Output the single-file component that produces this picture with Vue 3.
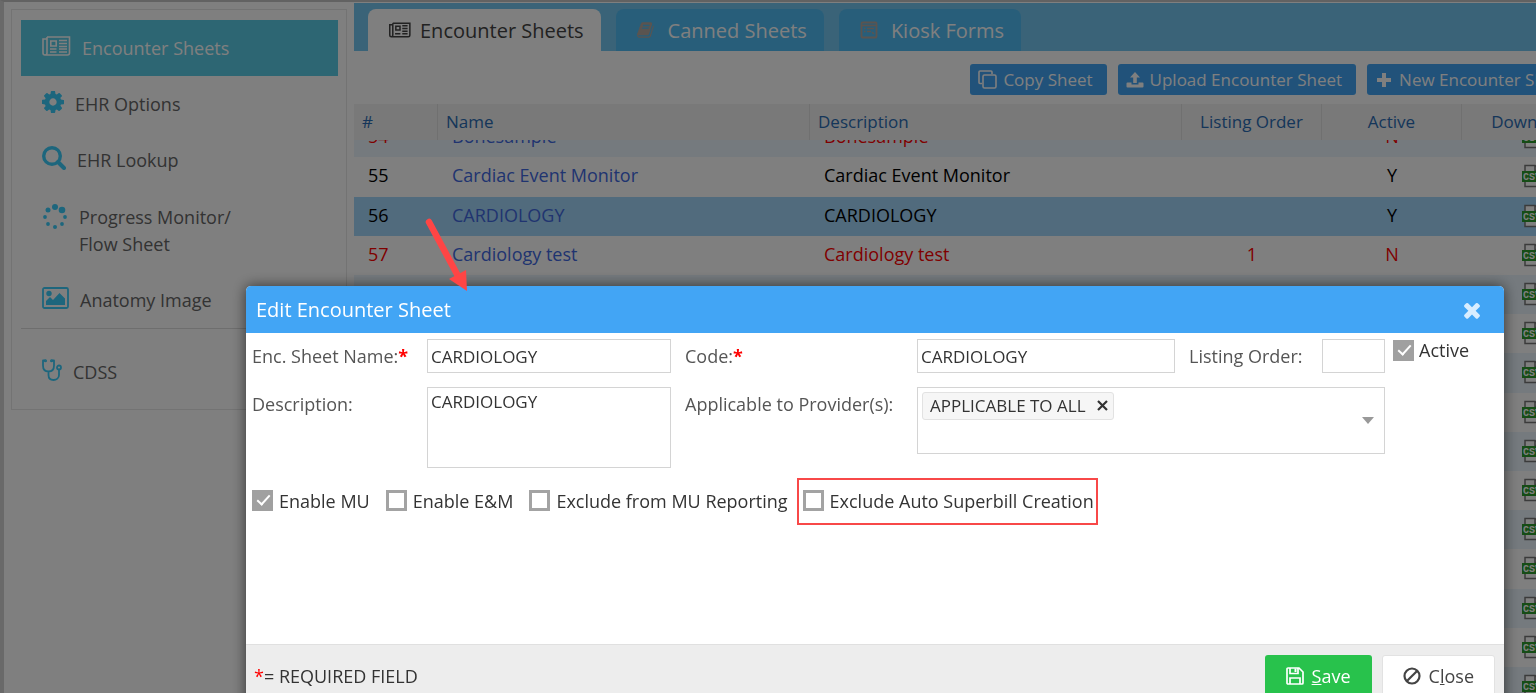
<script setup>
import { ref } from 'vue'

const rows = ref([
  { n: 54, name: 'Bonesample', desc: 'Bonesample', order: '', active: 'N' },
  { n: 55, name: 'Cardiac Event Monitor', desc: 'Cardiac Event Monitor', order: '', active: 'Y' },
  { n: 56, name: 'CARDIOLOGY', desc: 'CARDIOLOGY', order: '', active: 'Y' },
  { n: 57, name: 'Cardiology test', desc: 'Cardiology test', order: '1', active: 'N' },
  ...Array.from({ length: 11 }, () => ({ n: '', name: '', desc: '', order: '', active: '' })),
])

const form = ref({
  name: 'CARDIOLOGY',
  code: 'CARDIOLOGY',
  order: '',
  active: true,
  description: 'CARDIOLOGY',
  enableMu: true,
  enableEm: false,
  excludeMu: false,
  excludeSuperbill: false,
})
</script>

<template>
  <div class="page">
    <aside class="side">
      <nav class="menu" aria-label="Encounter settings">
        <a href="#" class="item current">
          <svg class="ico" width="29" height="20" viewBox="0 0 29 20" fill="none" stroke="currentColor" stroke-width="1.6">
            <path d="M5 1h22.500v16a2 2 0 0 1-2 2H3a2 2 0 0 1-2-2V3h4M5 1v16a2 2 0 0 1-2 2" />
            <path d="M8.800 5h5.400v5H8.800zM17 4.500h8M17 7.500h8M17 10.500h8M8 13h6.500M17 13h8M8 16h6.500M17 16h8" />
          </svg>
          <span>Encounter Sheets</span>
        </a>
        <a href="#" class="item">
          <svg class="ico" width="22" height="22" viewBox="0 0 1536 1536" fill="currentColor">
            <path d="M1024 768q0-106-75-181t-181-75-181 75-75 181 75 181 181 75 181-75 75-181zm512-109v222q0 12-8 23t-20 13l-185 28q-19 54-39 91 35 50 107 138 10 12 10 25t-9 23q-27 37-99 108t-94 71q-12 0-26-9l-138-108q-44 23-91 38-16 136-29 186-7 28-36 28h-222q-14 0-24.500-8.500t-11.500-21.500l-28-184q-49-16-90-37l-141 107q-10 9-25 9-14 0-25-11-126-114-165-168-7-10-7-23 0-12 8-23 15-21 51-66.500t54-70.500q-27-50-41-99l-183-27q-13-2-21-12.500t-8-23.500v-222q0-12 8-23t19-13l186-28q14-46 39-92-40-57-107-138-10-12-10-24 0-10 9-23 26-36 98.500-107.500t94.500-71.500q13 0 26 10l138 107q44-23 91-38 16-136 29-186 7-28 36-28h222q14 0 24.500 8.500t11.500 21.500l28 184q49 16 90 37l142-107q9-9 24-9 13 0 25 10 129 119 165 170 7 8 7 22 0 12-8 23-15 21-51 66.500t-54 70.500q26 50 41 98l183 28q13 2 21 12.500t8 23.500z" />
          </svg>
          <span>EHR Options</span>
        </a>
        <a href="#" class="item">
          <svg class="ico" width="24" height="24" viewBox="0 0 24 24" fill="none" stroke="currentColor">
            <circle cx="10" cy="10" r="8.300" stroke-width="3.400" />
            <path d="M16 16l6 6" stroke-width="4" stroke-linecap="round" />
          </svg>
          <span>EHR Lookup</span>
        </a>
        <a href="#" class="item tall">
          <svg class="ico" width="26" height="26" viewBox="0 0 26 26" fill="currentColor">
            <circle cx="13" cy="3" r="3" /><circle cx="20" cy="6" r="3.300" />
            <circle cx="23" cy="13" r="1.900" /><circle cx="20" cy="20" r="1.900" />
            <circle cx="13" cy="23" r="2" /><circle cx="6" cy="20" r="1.900" />
            <circle cx="3" cy="13" r="1.900" /><circle cx="6" cy="6" r="2.500" />
          </svg>
          <span>Progress Monitor/<br>Flow Sheet</span>
        </a>
        <a href="#" class="item">
          <svg class="ico" width="27" height="22" viewBox="0 0 27 22" fill="none">
            <rect x="1" y="1" width="25" height="20" rx="1.500" stroke="currentColor" stroke-width="1.800" />
            <circle cx="7" cy="6.500" r="2.700" fill="currentColor" />
            <path d="M4 18v-4l4-4 3 3 6.500-7 5.500 5.500V18z" fill="currentColor" />
          </svg>
          <span>Anatomy Image</span>
        </a>
        <hr class="rule">
        <a href="#" class="item last">
          <svg class="ico" width="20" height="22" viewBox="0 0 20 22" fill="none" stroke="currentColor" stroke-width="1.800">
            <path d="M3.500 1.500H1v5c0 3.500 2 6 5.500 6s5.500-2.500 5.500-6v-5H9.500M6.500 12.500V16c0 3 2 5 5 5s5.500-2 5.500-5v-5.500" stroke-linejoin="round" />
            <circle cx="17" cy="8.500" r="2" /><circle cx="3.500" cy="1.800" r="0.600" /><circle cx="9.500" cy="1.800" r="0.600" />
          </svg>
          <span>CDSS</span>
        </a>
      </nav>
    </aside>

    <main class="main">
      <div class="wide">
        <div class="tabs" role="tablist">
          <button type="button" role="tab" class="tab on" aria-selected="true">
            <svg width="22" height="16" viewBox="0 0 29 20" fill="none" stroke="currentColor" stroke-width="2">
              <path d="M5 1h22.500v16a2 2 0 0 1-2 2H3a2 2 0 0 1-2-2V3h4M5 1v16a2 2 0 0 1-2 2" />
              <path d="M9 5h5.500v5H9zM17.500 4.500h7M17.500 8h7M17.500 11.500h7M8 15h7M17.500 15h7" />
            </svg>
            Encounter Sheets
          </button>
          <button type="button" role="tab" class="tab" aria-selected="false">
            <svg width="22" height="18" viewBox="0 0 1792 1792" preserveAspectRatio="xMinYMid meet" fill="currentColor">
              <path d="M1639 478q40 57 18 129l-275 906q-19 64-76.500 107.500t-122.500 43.500h-923q-77 0-148.500-53.500t-99.500-131.500q-24-67-2-127 0-4 3-27t4-37q1-8-3-21.500t-3-19.500q2-11 8-21t16.500-23.500 16.500-23.500q23-38 45-91.500t30-91.500q3-10 .5-30t-.5-28q3-11 17-28t17-23q21-36 42-92t25-90q1-9-2.500-32t.5-28q4-13 22-30.500t22-22.500q19-26 42.500-84.500t27.500-96.500q1-8-3-25.500t-2-26.500q2-8 9-18t18-23 17-21q8-12 16.500-30.500t15-35 16-36 19.500-32 26.500-23.500 36-11.500 47.500 5.500l-1 3q38-9 51-9h761q74 0 114 56t18 130l-274 906q-36 119-71.500 153.500t-128.500 34.500h-869q-27 0-38 15-11 16-1 43 24 70 144 70h923q29 0 56-15.500t35-41.500l300-987q7-22 5-57 38 15 59 43zm-1064 2q-4 13 2 22.500t20 9.500h608q13 0 25.500-9.500t16.500-22.500l21-64q4-13-2-22.500t-20-9.500h-608q-13 0-25.500 9.500t-16.500 22.500zm-83 256q-4 13 2 22.500t20 9.500h608q13 0 25.500-9.500t16.500-22.500l21-64q4-13-2-22.500t-20-9.500h-608q-13 0-25.500 9.500t-16.500 22.500z" />
            </svg>
            Canned Sheets
          </button>
          <button type="button" role="tab" class="tab" aria-selected="false">
            <svg width="22" height="18" viewBox="0 0 18 18" preserveAspectRatio="xMinYMid meet" fill="none" stroke="currentColor">
              <rect x="1.500" y="1.500" width="15" height="15" rx="1" stroke-width="1.800" />
              <path d="M2 4.500h14" stroke-width="1.800" />
              <path d="M4 7.500h1.500M7 7.500h7M4 10.500h1.500M7 10.500h4M12 11l2 2" stroke-width="1.400" />
            </svg>
            Kiosk Forms
          </button>
        </div>

        <div class="tools">
          <button type="button" class="btn">
            <svg width="19" height="19" viewBox="0 0 19 19" fill="none" stroke="currentColor" stroke-width="1.600">
              <rect x="5" y="5" width="13" height="13" rx="1.500" />
              <path d="M4 13.500H2A1 1 0 0 1 1 12.500V2a1 1 0 0 1 1-1h11a1 1 0 0 1 1 1v2" />
            </svg>
            Copy Sheet
          </button>
          <button type="button" class="btn">
            <svg width="18" height="18" viewBox="0 0 18 18" fill="currentColor">
              <path d="M9 1l5 5.500h-3.200V12H7.200V6.500H4zM1.500 11.500h4v2h7v-2h4q1 0 1 1v3q0 1-1 1h-15q-1 0-1-1v-3q0-1 1-1z" />
            </svg>
            Upload Encounter Sheet
          </button>
          <button type="button" class="btn">
            <svg width="18" height="18" viewBox="0 0 18 18" fill="none" stroke="currentColor" stroke-width="4">
              <path d="M9 2v14M2 9h14" />
            </svg>
            New Encounter Sheet
          </button>
        </div>

        <table class="grid">
          <colgroup>
            <col class="c-num"><col><col><col class="c-sm"><col class="c-sm"><col class="c-sm">
          </colgroup>
          <thead>
            <tr>
              <th scope="col">#</th>
              <th scope="col">Name</th>
              <th scope="col">Description</th>
              <th scope="col" class="mid">Listing Order</th>
              <th scope="col" class="mid">Active</th>
              <th scope="col" class="mid">Download</th>
            </tr>
          </thead>
          <tbody>
            <tr v-for="(r, i) in rows" :key="i" :class="{ off: r.active === 'N', picked: r.n === 56 }">
              <td><div class="cell">{{ r.n }}</div></td>
              <td><div class="cell"><a v-if="r.name" href="#">{{ r.name }}</a></div></td>
              <td><div class="cell">{{ r.desc }}</div></td>
              <td class="mid"><div class="cell">{{ r.order }}</div></td>
              <td class="mid"><div class="cell">{{ r.active }}</div></td>
              <td class="mid">
                <div class="cell">
                  <svg class="csv" width="22" height="24" viewBox="0 0 22 24">
                    <path d="M4 1.500h10l5 5v16H4z" fill="#fff" stroke="#777" stroke-width="1.500" />
                    <path d="M14 1.500v5h5" fill="none" stroke="#777" stroke-width="1.500" />
                    <rect x="1" y="7" width="21" height="11" fill="#2c9a2c" />
                    <text x="11" y="16" text-anchor="middle">CSV</text>
                  </svg>
                </div>
              </td>
            </tr>
          </tbody>
        </table>
      </div>
    </main>

    <div class="overlay">
      <section class="modal" role="dialog" aria-label="Edit Encounter Sheet">
        <header class="m-head">
          <span>Edit Encounter Sheet</span>
          <button type="button" class="x" aria-label="Close dialog">
            <svg width="24" height="24" viewBox="0 0 1792 1792" fill="currentColor">
              <path d="M1490 1322q0 40-28 68l-136 136q-28 28-68 28t-68-28l-294-294-294 294q-28 28-68 28t-68-28l-136-136q-28-28-28-68t28-68l294-294-294-294q-28-28-28-68t28-68l136-136q28-28 68-28t68 28l294 294 294-294q28-28 68-28t68 28l136 136q28 28 28 68t-28 68l-294 294 294 294q28 28 28 68z" />
            </svg>
          </button>
        </header>

        <form class="m-body" @submit.prevent>
          <div class="fields">
            <label for="f-name">Enc. Sheet Name:<b class="req">*</b></label>
            <input id="f-name" v-model="form.name" type="text" class="box">
            <label for="f-code" class="in">Code:<b class="req">*</b></label>
            <input id="f-code" v-model="form.code" type="text" class="box">
            <label for="f-order" class="in">Listing Order:</label>
            <input id="f-order" v-model="form.order" type="text" class="box">
            <label class="check act"><input v-model="form.active" type="checkbox"><span>Active</span></label>

            <label for="f-desc">Description:</label>
            <textarea id="f-desc" v-model="form.description" class="box"></textarea>
            <label id="l-prov" class="in" for="f-prov">Applicable to Provider(s):</label>
            <div class="multi">
              <span class="tag">APPLICABLE TO ALL
                <button type="button" aria-label="Remove provider">
                  <svg width="11" height="11" viewBox="0 0 11 11" fill="none" stroke="currentColor" stroke-width="2.200"><path d="M1 1l9 9M10 1l-9 9" /></svg>
                </button>
              </span>
              <button id="f-prov" type="button" class="drop" aria-labelledby="l-prov">
                <svg width="12" height="7" viewBox="0 0 12 7" fill="currentColor"><path d="M0 0h12L6 7z" /></svg>
              </button>
            </div>
          </div>

          <div class="checks">
            <label class="check"><input v-model="form.enableMu" type="checkbox"><span>Enable MU</span></label>
            <label class="check"><input v-model="form.enableEm" type="checkbox"><span>Enable E&amp;M</span></label>
            <label class="check"><input v-model="form.excludeMu" type="checkbox"><span>Exclude from MU Reporting</span></label>
            <label class="check marked"><input v-model="form.excludeSuperbill" type="checkbox"><span>Exclude Auto Superbill Creation</span></label>
          </div>
        </form>

        <footer class="m-foot">
          <span class="note"><span class="req">*</span>= REQUIRED FIELD</span>
          <button type="button" class="act-btn save">
            <svg width="18" height="18" viewBox="0 0 18 18" fill="none" stroke="currentColor" stroke-width="1.700">
              <path d="M1 2a1 1 0 0 1 1-1h11l4 4v11a1 1 0 0 1-1 1H2a1 1 0 0 1-1-1z" />
              <path d="M4 1v5.500h8V1M4 17v-6h10v6" /><path d="M9.500 1.500v3.500" stroke-width="2" />
            </svg>
            <span><u>S</u>ave</span>
          </button>
          <button type="button" class="act-btn close">
            <svg width="18" height="18" viewBox="0 0 18 18" fill="none" stroke="currentColor" stroke-width="2.200">
              <circle cx="9" cy="9" r="7.500" /><path d="M14.300 3.700L3.700 14.300" />
            </svg>
            <span>C<u>l</u>ose</span>
          </button>
        </footer>
      </section>
      <svg class="arrow" width="48" height="78" viewBox="0 0 48 78" fill="#ff4545">
        <path d="M9 7l29 54" stroke="#ff4545" stroke-width="6.500" stroke-linecap="round" />
        <path d="M47 76L29 64l17-9z" />
      </svg>
    </div>
  </div>
</template>

<style>
html,
body {
  overflow: hidden;
  background: #fff;
}
</style>

<style scoped>
.page {
  display: flex;
  align-items: flex-start;
  height: 100vh;
  overflow: hidden;
  box-sizing: border-box;
  border-top: 2px solid #c4c4c4;
  border-left: 4px solid #d2d2d2;
  font-family: "Open Sans", "Noto Sans", sans-serif;
  font-size: 18px;
  color: #555;
}
button,
input,
textarea {
  font: inherit;
  color: inherit;
}
a {
  color: inherit;
  text-decoration: none;
}
.side {
  flex: none;
  width: 350px;
  box-sizing: border-box;
  padding: 7px 7px 0;
}
.menu {
  border: 1px solid #e6e6e6;
  padding: 10px 8px 9px 9px;
}
.item {
  display: flex;
  align-items: center;
  gap: 11px;
  height: 56px;
  padding: 0 21px;
  color: #666;
  line-height: 27px;
}
.item .ico {
  flex: none;
  color: #3bcdfa;
  margin-bottom: 4px;
}
.item.current {
  background: #5acce6;
  color: #fff;
}
.item.current .ico {
  color: #fff;
}
.item.tall {
  height: 84px;
  align-items: flex-start;
  box-sizing: border-box;
  padding-top: 16px;
}
.item.tall .ico {
  margin: 0;
}
.rule {
  border: 0;
  border-top: 1px solid #dcdcdc;
  margin: 0 0 15px;
}
.main {
  flex: 1;
  min-width: 0;
  overflow: hidden;
  padding-top: 1px;
}
.wide {
  width: calc(100% + 66px);
}
.tabs {
  display: flex;
  gap: 15px;
  height: 48px;
  box-sizing: border-box;
  padding: 6px 14px 0;
  background: #74c6f0;
}
.tab {
  display: flex;
  align-items: center;
  gap: 9px;
  padding: 0 17px 0 21px;
  border: 0;
  border-radius: 8px 8px 0 0;
  background: #50bcf4;
  color: #fff;
  font-size: 20px;
  white-space: nowrap;
}
.tab svg {
  color: #b4a8a0;
}
.tab.on,
.tab.on svg {
  color: #444;
}
.tab.on {
  background: #fff;
}
.tools {
  display: flex;
  justify-content: flex-end;
  gap: 11px;
  padding: 13px 18px 9px;
}
.btn {
  display: flex;
  align-items: center;
  gap: 6px;
  height: 31px;
  padding: 0 14px 0 8px;
  border: 0;
  border-radius: 3px;
  background: #42a5f5;
  color: #fff;
  font-size: 17px;
  white-space: nowrap;
}
.grid {
  width: 100%;
  table-layout: fixed;
  border-collapse: separate;
  border-spacing: 0;
}
.c-num {
  width: 84px;
}
.c-sm {
  width: 140px;
}
th {
  height: 36px;
  box-sizing: border-box;
  padding: 0 8px;
  border-right: 1px solid #e0e0e0;
  background: #f2f2f2;
  color: #2a6cb4;
  font-size: 17px;
  font-weight: 400;
  line-height: 24px;
  text-align: left;
}
td {
  padding: 0 14px;
  color: #000;
}
.mid {
  padding: 0;
  text-align: center;
}
.cell {
  box-sizing: border-box;
  height: 39px;
  line-height: 36px;
}
tr:nth-child(5n + 2) .cell {
  height: 40px;
}
tr:first-child .cell {
  display: flex;
  flex-direction: column;
  justify-content: flex-end;
  height: 17px;
  overflow: hidden;
}
tr:first-child td:not(:last-child) .cell {
  padding-bottom: 3px;
}
tbody tr:nth-child(odd) td {
  background: #eaf5fd;
}
tbody tr.picked td {
  background: #a2d6fa;
}
td a {
  color: #4169e1;
}
.off td {
  color: #f00;
}
.csv {
  display: block;
  flex: none;
  margin: 0 auto;
  padding: 7px 0 8px;
}
.csv text {
  fill: #fff;
  font: bold 10px "Liberation Mono", monospace;
}
.overlay {
  position: fixed;
  inset: 0;
  overflow: hidden;
  padding: 286px 32px 0 246px;
  background: rgba(0, 0, 0, 0.5);
}
.modal {
  border-radius: 5px 5px 0 0;
  background: #fff;
  box-shadow: 0 0 14px rgba(0, 0, 0, 0.6);
}
.m-head {
  display: flex;
  align-items: center;
  justify-content: space-between;
  height: 47px;
  padding: 0 20px 0 10px;
  border-radius: 5px 5px 0 0;
  background: #42a5f5;
  color: #fff;
  font-size: 20px;
}
.x {
  display: flex;
  padding: 0;
  border: 0;
  background: none;
  color: #d8edff;
}
.m-body {
  min-height: 311px;
  box-sizing: border-box;
  padding: 6px 0 0 6px;
}
.fields {
  display: grid;
  grid-template-columns: 175px minmax(0, 244fr) 246px minmax(0, 258fr) 147px 63px 119px;
  row-gap: 14px;
  align-items: start;
}
.fields > label {
  line-height: 34px;
}
.in {
  padding-left: 14px;
}
.req {
  color: #f00;
}
.box {
  box-sizing: border-box;
  width: 100%;
  height: 34px;
  margin: 0;
  padding: 0 3px;
  border: 1px solid #d4d4d4;
  border-radius: 0;
  background: #fff;
  color: #333;
  font-size: 17px;
}
textarea.box {
  display: block;
  height: 81px;
  padding: 1px 3px;
  line-height: 26px;
  resize: none;
}
.multi {
  grid-column: 4 / span 3;
  display: flex;
  justify-content: space-between;
  align-items: flex-start;
  height: 67px;
  box-sizing: border-box;
  padding: 4px 10px 4px 4px;
  border: 1px solid #d4d4d4;
}
.tag {
  display: flex;
  align-items: center;
  gap: 11px;
  height: 28px;
  box-sizing: border-box;
  padding: 0 5px 2px 7px;
  border: 1px solid #e2e2e2;
  border-radius: 3px;
  background: #f6f6f6;
  color: #333;
  font-size: 17px;
}
.tag button,
.drop {
  display: flex;
  padding: 0;
  border: 0;
  background: none;
}
.drop {
  align-self: center;
  color: #999;
}
.check {
  display: flex;
  align-items: center;
  gap: 6px;
  color: #333;
  white-space: nowrap;
}
.check input {
  appearance: none;
  flex: none;
  width: 21px;
  height: 21px;
  margin: 0;
  border: 3px solid #a3a3a3;
  background: #fff;
}
.check input:checked {
  background: #a0a0a0;
  border-color: #a0a0a0;
}
.check input:checked::before {
  content: "";
  display: block;
  width: 5px;
  height: 11px;
  margin: -1px 0 0 5px;
  border: solid #fff;
  border-width: 0 2px 2px 0;
  transform: rotate(42deg);
}
.fields .act {
  gap: 5px;
  padding-left: 8px;
  line-height: 22px;
}
.checks {
  display: flex;
  align-items: center;
  gap: 16px;
  padding-top: 10px;
}
.checks .check {
  padding-bottom: 2px;
}
.checks .marked {
  height: 41px;
  margin-left: -7px;
  padding-left: 4px;
  padding-right: 2px;
  border: 2px solid #f84848;
}
.m-foot {
  display: flex;
  align-items: flex-start;
  gap: 10px;
  padding: 10px 9px 12px 8px;
  border-top: 1px solid #e0e0e0;
  background: #ededed;
}
.note {
  flex: 1;
  color: #333;
  line-height: 42px;
}
.act-btn {
  display: flex;
  align-items: center;
  gap: 8px;
  height: 42px;
  padding: 0 21px;
  border: 0;
  border-radius: 3px;
}
.save {
  background: #28c24c;
  color: #fff;
}
.close {
  padding: 0 20px;
  border: 1px solid #e2e2e2;
  background: #fff;
  color: #444;
}
.arrow {
  position: absolute;
  left: 420px;
  top: 215px;
}
</style>
